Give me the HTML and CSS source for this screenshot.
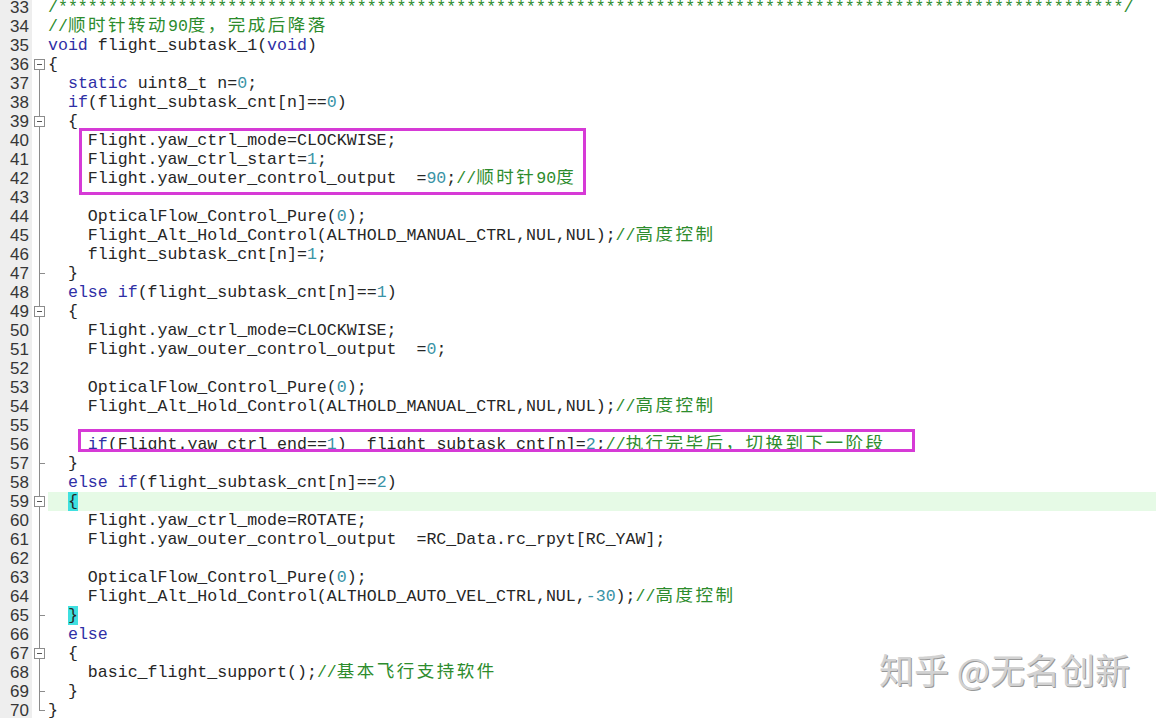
FILE: index.html
```html
<!DOCTYPE html>
<html>
<head>
<meta charset="utf-8">
<link rel="stylesheet" href="styles.css">
</head>
<body>
<div class="editor">
  <div class="ln"><span class="num">33</span><span class="fold"></span><span class="code"><span class="c">/***********************************************************************************************************/</span></span></div>
  <div class="ln"><span class="num">34</span><span class="fold"></span><span class="code"><span class="c">//<span class="cn">顺时针转动</span>90<span class="cn">度，完成后降落</span></span></span></div>
  <div class="ln"><span class="num">35</span><span class="fold"></span><span class="code"><span class="k">void</span> flight_subtask_1(<span class="k">void</span>)</span></div>
  <div class="ln"><span class="num">36</span><span class="fold o1"></span><span class="code">{</span></div>
  <div class="ln"><span class="num">37</span><span class="fold v"></span><span class="code">  <span class="k">static</span> uint8_t n=<span class="n">0</span>;</span></div>
  <div class="ln"><span class="num">38</span><span class="fold v"></span><span class="code">  <span class="k">if</span>(flight_subtask_cnt[n]==<span class="n">0</span>)</span></div>
  <div class="ln"><span class="num">39</span><span class="fold o"></span><span class="code">  {</span></div>
  <div class="ln"><span class="num">40</span><span class="fold v"></span><span class="code">    Flight.yaw_ctrl_mode=CLOCKWISE;</span></div>
  <div class="ln"><span class="num">41</span><span class="fold v"></span><span class="code">    Flight.yaw_ctrl_start=<span class="n">1</span>;</span></div>
  <div class="ln"><span class="num">42</span><span class="fold v"></span><span class="code">    Flight.yaw_outer_control_output  =<span class="n">90</span>;<span class="c">//<span class="cn">顺时针</span>90<span class="cn">度</span></span></span></div>
  <div class="ln"><span class="num">43</span><span class="fold v"></span><span class="code"></span></div>
  <div class="ln"><span class="num">44</span><span class="fold v"></span><span class="code">    OpticalFlow_Control_Pure(<span class="n">0</span>);</span></div>
  <div class="ln"><span class="num">45</span><span class="fold v"></span><span class="code">    Flight_Alt_Hold_Control(ALTHOLD_MANUAL_CTRL,NUL,NUL);<span class="c">//<span class="cn">高度控制</span></span></span></div>
  <div class="ln"><span class="num">46</span><span class="fold v"></span><span class="code">    flight_subtask_cnt[n]=<span class="n">1</span>;</span></div>
  <div class="ln"><span class="num">47</span><span class="fold e"></span><span class="code">  }</span></div>
  <div class="ln"><span class="num">48</span><span class="fold v"></span><span class="code">  <span class="k">else</span> <span class="k">if</span>(flight_subtask_cnt[n]==<span class="n">1</span>)</span></div>
  <div class="ln"><span class="num">49</span><span class="fold o"></span><span class="code">  {</span></div>
  <div class="ln"><span class="num">50</span><span class="fold v"></span><span class="code">    Flight.yaw_ctrl_mode=CLOCKWISE;</span></div>
  <div class="ln"><span class="num">51</span><span class="fold v"></span><span class="code">    Flight.yaw_outer_control_output  =<span class="n">0</span>;</span></div>
  <div class="ln"><span class="num">52</span><span class="fold v"></span><span class="code"></span></div>
  <div class="ln"><span class="num">53</span><span class="fold v"></span><span class="code">    OpticalFlow_Control_Pure(<span class="n">0</span>);</span></div>
  <div class="ln"><span class="num">54</span><span class="fold v"></span><span class="code">    Flight_Alt_Hold_Control(ALTHOLD_MANUAL_CTRL,NUL,NUL);<span class="c">//<span class="cn">高度控制</span></span></span></div>
  <div class="ln"><span class="num">55</span><span class="fold v"></span><span class="code"></span></div>
  <div class="ln"><span class="num">56</span><span class="fold v"></span><span class="code">    <span class="k">if</span>(Flight.yaw_ctrl_end==<span class="n">1</span>)  flight_subtask_cnt[n]=<span class="n">2</span>;<span class="c">//<span class="cn">执行完毕后，切换到下一阶段</span></span></span></div>
  <div class="ln"><span class="num">57</span><span class="fold e"></span><span class="code">  }</span></div>
  <div class="ln"><span class="num">58</span><span class="fold v"></span><span class="code">  <span class="k">else</span> <span class="k">if</span>(flight_subtask_cnt[n]==<span class="n">2</span>)</span></div>
  <div class="ln"><span class="num">59</span><span class="fold o"></span><span class="code hl">  <span class="br">{</span></span></div>
  <div class="ln"><span class="num">60</span><span class="fold v"></span><span class="code">    Flight.yaw_ctrl_mode=ROTATE;</span></div>
  <div class="ln"><span class="num">61</span><span class="fold v"></span><span class="code">    Flight.yaw_outer_control_output  =RC_Data.rc_rpyt[RC_YAW];</span></div>
  <div class="ln"><span class="num">62</span><span class="fold v"></span><span class="code"></span></div>
  <div class="ln"><span class="num">63</span><span class="fold v"></span><span class="code">    OpticalFlow_Control_Pure(<span class="n">0</span>);</span></div>
  <div class="ln"><span class="num">64</span><span class="fold v"></span><span class="code">    Flight_Alt_Hold_Control(ALTHOLD_AUTO_VEL_CTRL,NUL,<span class="n">-30</span>);<span class="c">//<span class="cn">高度控制</span></span></span></div>
  <div class="ln"><span class="num">65</span><span class="fold e"></span><span class="code">  <span class="br">}</span></span></div>
  <div class="ln"><span class="num">66</span><span class="fold v"></span><span class="code">  <span class="k">else</span></span></div>
  <div class="ln"><span class="num">67</span><span class="fold o"></span><span class="code">  {</span></div>
  <div class="ln"><span class="num">68</span><span class="fold v"></span><span class="code">    basic_flight_support();<span class="c">//<span class="cn">基本飞行支持软件</span></span></span></div>
  <div class="ln"><span class="num">69</span><span class="fold e"></span><span class="code">  }</span></div>
  <div class="ln"><span class="num">70</span><span class="fold l"></span><span class="code">}</span></div>
</div>
<div class="mark box1"></div>
<div class="mark box2"></div>
<div class="watermark">知乎 @无名创新</div>
</body>
</html>
```

FILE: styles.css
```css
html, body {
  margin: 0;
  padding: 0;
  background: #ffffff;
  overflow: hidden;
}
body {
  width: 1156px;
  height: 718px;
  position: relative;
}
.editor {
  margin-top: -2px;
  display: flex;
  flex-direction: column;
}
.ln {
  display: flex;
  height: 19px;
  line-height: 19px;
  overflow: hidden;
}
.num {
  flex: none;
  width: 29px;
  padding-right: 3px;
  background: #eeeeee;
  text-align: right;
  font-family: "Liberation Sans", Arial, sans-serif;
  font-size: 17px;
  color: #363636;
}
.fold {
  flex: none;
  width: 16px;
  position: relative;
  background: #ffffff;
}
.fold.v::before,
.fold.e::before,
.fold.o::before,
.fold.o1::before,
.fold.l::before {
  content: "";
  position: absolute;
  left: 7px;
  top: 0;
  bottom: 0;
  width: 1px;
  background: #8c8c8c;
}
.fold.o1::before { top: 9px; }
.fold.l::before { bottom: 9px; }
.fold.e::after,
.fold.l::after {
  content: "";
  position: absolute;
  left: 7px;
  top: 9px;
  width: 6px;
  height: 1px;
  background: #8c8c8c;
}
.fold.o::after,
.fold.o1::after {
  content: "";
  position: absolute;
  left: 2px;
  top: 4px;
  width: 9px;
  height: 9px;
  border: 1px solid #8c8c8c;
  background: linear-gradient(#555555, #555555) center / 5px 1px no-repeat, #ffffff;
}
.code {
  flex: 1;
  white-space: pre;
  font-family: "Liberation Mono", "Courier New", monospace;
  font-size: 16.6px;
  color: #262626;
}
.code.hl { background: #e6fae6; margin-left: -1px; padding-left: 1px; }
.k { color: #2f2fa6; }
.n { color: #3a93a6; }
.c { color: #2d8c2d; }
.cn {
  font-family: "Noto Sans CJK SC", sans-serif;
  font-size: 17.5px;
  letter-spacing: 2.5px;
  line-height: 0;
}
.br { background: #3fe0e0; }
.mark {
  position: absolute;
  border: 3px solid #d63ad6;
}
.box1 { left: 79px; top: 128px; width: 501px; height: 61px; }
.box2 { left: 78px; top: 429px; width: 831px; height: 17px; }
.watermark {
  position: absolute;
  left: 879px;
  top: 646px;
  font-family: "Noto Sans CJK SC", sans-serif;
  font-size: 35px;
  line-height: 46px;
  color: #d2d2d2;
  text-shadow: 1px 1px 0 #999999, -1px -1px 0 #ffffff;
  white-space: pre;
}
```
